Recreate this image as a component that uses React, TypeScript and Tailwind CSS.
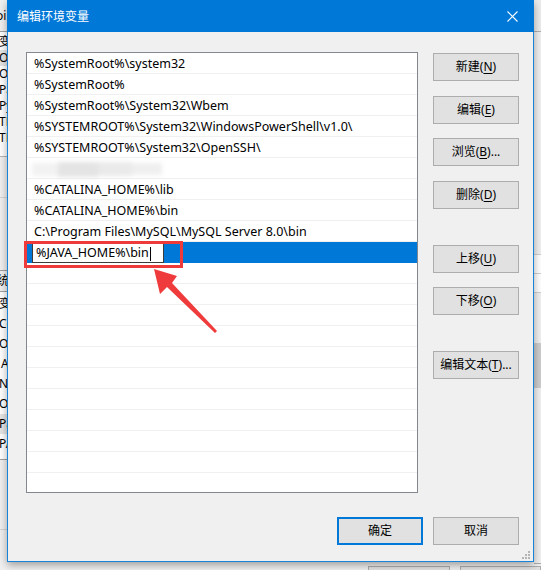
import React from "react";

type Entry = { text?: string; blurred?: boolean; editing?: boolean };

const entries: Entry[] = [
  { text: "%SystemRoot%\\system32" },
  { text: "%SystemRoot%" },
  { text: "%SystemRoot%\\System32\\Wbem" },
  { text: "%SYSTEMROOT%\\System32\\WindowsPowerShell\\v1.0\\" },
  { text: "%SYSTEMROOT%\\System32\\OpenSSH\\" },
  { blurred: true },
  { text: "%CATALINA_HOME%\\lib" },
  { text: "%CATALINA_HOME%\\bin" },
  { text: "C:\\Program Files\\MySQL\\MySQL Server 8.0\\bin" },
  { editing: true, text: "%JAVA_HOME%\\bin" },
  {}, {}, {}, {}, {}, {}, {}, {}, {}, {}, {},
];

function Mnemonic({ label, keyChar, tail = "" }: { label: string; keyChar: string; tail?: string }) {
  return (
    <span className="whitespace-nowrap">
      {label}(<span className="underline underline-offset-[2px]">{keyChar}</span>){tail}
    </span>
  );
}

function WinButton({
  children,
  className = "",
  primary = false,
}: {
  children: React.ReactNode;
  className?: string;
  primary?: boolean;
}) {
  return (
    <div
      className={
        "w-[86px] h-[28px] flex items-center justify-center bg-[#e1e1e1] " +
        (primary ? "border-2 border-[#0078d7] " : "border border-[#adadad] ") +
        className
      }
    >
      {children}
    </div>
  );
}

function PathRow({ entry }: { entry: Entry }) {
  if (entry.editing) {
    return (
      <div className="h-[21px] shrink-0 bg-[#0078d7] flex items-stretch pl-[5px]">
        <div className="w-[132px] bg-white border border-[#3c3c3c] flex items-center pl-[3px] pt-[2px]">
          <span className="leading-none text-[12.5px]">{entry.text}</span>
          <span className="ml-[1px] w-px h-[14px] bg-black" />
        </div>
      </div>
    );
  }
  return (
    <div className="h-[21px] shrink-0 border-b border-[#f0f0f0] flex items-center pl-[7px] pt-[2px]">
      {entry.blurred ? (
        <div className="flex items-center ml-[-2px] blur-[2px]">
          <div className="w-[26px] h-[13px] bg-[#f2f2f2]" />
          <div className="w-[40px] h-[15px] bg-[#e4e4e4]" />
          <div className="w-[34px] h-[14px] bg-[#eaeaea]" />
          <div className="w-[30px] h-[12px] bg-[#efefef]" />
        </div>
      ) : (
        <span className="leading-none whitespace-nowrap text-[12.5px]">{entry.text}</span>
      )}
    </div>
  );
}

function LeftBackdrop() {
  const upper = ["变", "O", "O", "Pa", "Py", "TE", "TM"];
  const lower = ["变", "Co", "Or", "A", "N", "O", "Pa", "PA"];
  return (
    <div className="absolute left-0 top-0 w-[7px] h-[570px] overflow-hidden flex flex-col bg-[#f0f0f0] text-[12px] leading-none">
      <div className="h-[31px] flex items-center -ml-[4px]">oi</div>
      <div className="h-px bg-[#a0a0a0]" />
      <div className="h-[125px] bg-white flex flex-col pt-[2px] border-b border-[#b4b4b4]">
        {upper.map((t, i) => (
          <div
            key={i}
            className={"h-[16px] flex items-center -ml-[1px] " + (i === 1 ? "bg-[#e5e5e5]" : "")}
          >
            {t}
          </div>
        ))}
      </div>
      <div className="h-[40px]" />
      <div className="h-px bg-[#d4d4d4]" />
      <div className="h-[72px]" />
      <div className="h-px bg-[#a0a0a0]" />
      <div className="h-[20px] flex items-center -ml-[3px]">统</div>
      <div className="h-px bg-[#a0a0a0]" />
      <div className="h-[168px] bg-white flex flex-col pt-[2px] border-b border-[#a0a0a0]">
        {lower.map((t, i) => (
          <div
            key={i}
            className={
              "h-[20px] flex items-center " +
              (i === 3 ? "ml-[1px] " : "-ml-[1px] ") +
              (i === 6 ? "bg-[#e5e5e5]" : "")
            }
          >
            {t}
          </div>
        ))}
      </div>
      <div className="h-[69px]" />
      <div className="h-px bg-[#d4d4d4]" />
    </div>
  );
}

function RightBackdrop() {
  return (
    <div className="absolute left-[534px] top-0 w-[7px] h-[570px] overflow-hidden flex flex-col bg-[#f0f0f0]">
      <div className="h-[31px] bg-[#ececec]" />
      <div className="h-px bg-[#b0b0b0]" />
      <div className="h-[222px]" />
      <div className="h-px bg-[#d0d0d0]" />
      <div className="h-[18px] bg-white" />
      <div className="h-px bg-[#d0d0d0]" />
      <div className="h-[18px] bg-white" />
      <div className="h-px bg-[#d0d0d0]" />
      <div className="h-[50px]" />
      <div className="h-[45px] bg-[#cdcdcd]" />
      <div className="h-[170px]" />
      <div className="h-px bg-[#adadad] mt-[5px]" />
    </div>
  );
}

function BottomBackdrop() {
  return (
    <div className="absolute left-0 top-[562px] w-[541px] h-[8px] overflow-hidden flex items-end pl-[368px] gap-[10px]">
      <div className="w-[86px] h-[4px] border-t border-x border-[#adadad] bg-[#e1e1e1]" />
      <div className="w-[86px] h-[4px] border-t border-x border-[#adadad] bg-[#e1e1e1]" />
    </div>
  );
}

export default function App() {
  return (
    <div className="relative w-[541px] h-[570px] overflow-hidden bg-[#f0f0f0] font-['Noto_Sans','Noto_Sans_CJK_SC',sans-serif] text-[12px] text-black">
      <LeftBackdrop />
      <RightBackdrop />
      <BottomBackdrop />

      {/* Edit environment variable dialog */}
      <div className="absolute left-[7px] top-0 w-[527px] h-[562px] flex flex-col bg-[#f0f0f0] border-x border-b border-[#1883d7] shadow-[0_3px_8px_rgba(0,0,0,0.35)]">
        <div className="-mx-px h-[32px] shrink-0 bg-[#0078d7] flex items-center justify-between pl-[10px] pr-[11px] text-white">
          <span className="font-['Noto_Sans_CJK_SC',sans-serif] text-[12px]">编辑环境变量</span>
          <svg width="11" height="11" viewBox="0 0 11 11" className="mr-[5px]">
            <path d="M0.5 0.5 L10.5 10.5 M10.5 0.5 L0.5 10.5" stroke="white" strokeWidth="1.1" />
          </svg>
        </div>

        <div className="flex pl-[18px] pt-[20px]">
          <div className="w-[392px] h-[441px] bg-white border border-[#828790] flex flex-col overflow-hidden">
            {entries.map((e, i) => (
              <PathRow key={i} entry={e} />
            ))}
          </div>

          <div className="ml-[15px] flex flex-col pt-[1px]">
            <WinButton>
              <Mnemonic label="新建" keyChar="N" />
            </WinButton>
            <WinButton className="mt-[15px]">
              <Mnemonic label="编辑" keyChar="E" />
            </WinButton>
            <WinButton className="mt-[14px]">
              <Mnemonic label="浏览" keyChar="B" tail="..." />
            </WinButton>
            <WinButton className="mt-[15px]">
              <Mnemonic label="删除" keyChar="D" />
            </WinButton>
            <WinButton className="mt-[36px]">
              <Mnemonic label="上移" keyChar="U" />
            </WinButton>
            <WinButton className="mt-[14px]">
              <Mnemonic label="下移" keyChar="O" />
            </WinButton>
            <WinButton className="mt-[36px]">
              <Mnemonic label="编辑文本" keyChar="T" tail="..." />
            </WinButton>
          </div>
        </div>

        <div className="flex justify-end gap-[10px] pr-[14px] mt-[24px]">
          <WinButton primary>确定</WinButton>
          <WinButton>取消</WinButton>
        </div>

        <div className="flex-1 flex items-end justify-end pr-[2px] pb-[1px]">
          <svg width="9" height="9" viewBox="0 0 9 9">
            <rect x="6" y="0" width="2" height="2" fill="#b5b5b5" />
            <rect x="3" y="3" width="2" height="2" fill="#b5b5b5" />
            <rect x="6" y="3" width="2" height="2" fill="#b5b5b5" />
            <rect x="0" y="6" width="2" height="2" fill="#b5b5b5" />
            <rect x="3" y="6" width="2" height="2" fill="#b5b5b5" />
            <rect x="6" y="6" width="2" height="2" fill="#b5b5b5" />
          </svg>
        </div>
      </div>

      {/* Red callout around the edited entry */}
      <div className="absolute left-[24px] top-[241px] w-[159px] h-[27px] border-[3px] border-[#ee3a3a]" />
      <svg className="absolute left-0 top-0" width="541" height="570" viewBox="0 0 541 570">
        <polygon
          points="154,269 160,294 167,287 215,333 217,331 172,283 177,276"
          fill="#ef3b3b"
        />
      </svg>
    </div>
  );
}
